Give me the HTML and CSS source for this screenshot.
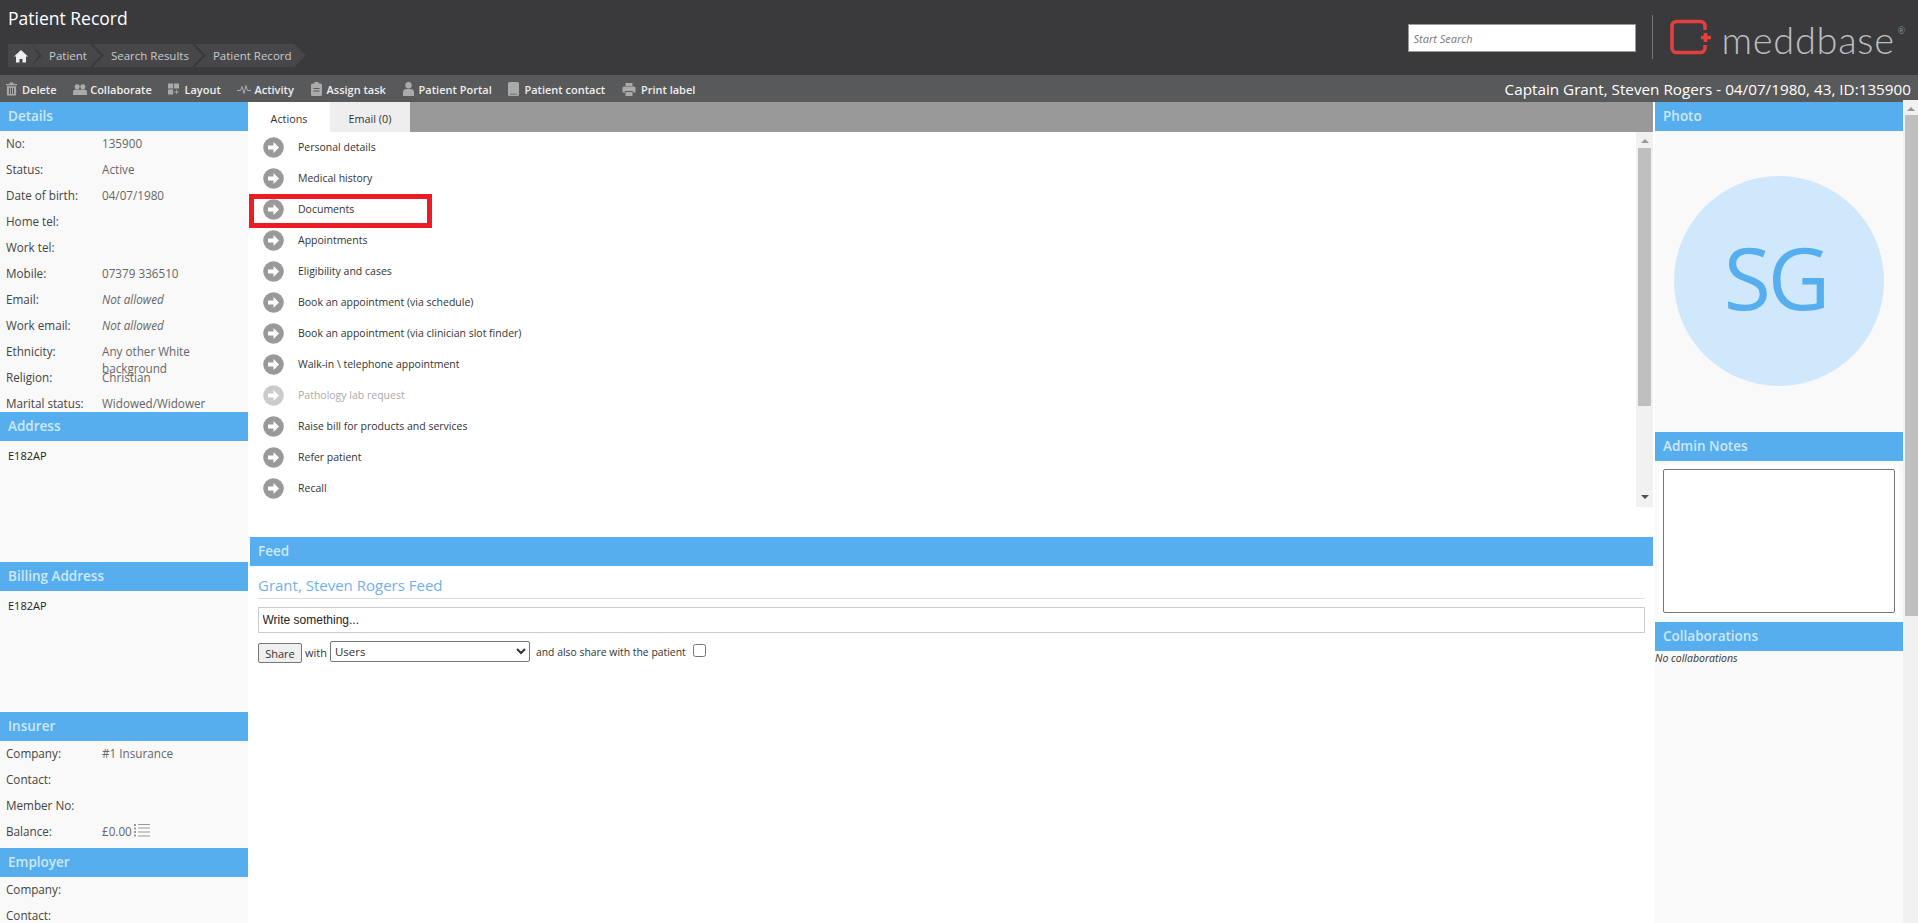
FILE: index.html
```html
<!DOCTYPE html>
<html lang="en">
<head>
<meta charset="utf-8">
<title>Patient Record</title>
<link rel="stylesheet" href="styles.css">
</head>
<body>
<svg class="defs" width="0" height="0" aria-hidden="true">
  <symbol id="go" viewBox="0 0 21 21">
    <circle cx="10.5" cy="10.5" r="10.300" fill="#999"/>
    <path d="M5 8.500h5.500V5l5.500 5.500-5.500 5.500v-3.500H5z" fill="#fff"/>
  </symbol>
</svg>

<header class="topbar">
  <div class="topbar-left">
    <h1 class="page-title">Patient Record</h1>
    <nav class="crumbs">
      <a class="crumb crumb-home"><svg class="home" viewBox="0 0 14 14"><path d="M7 1 0 7.500h2V13.500h3.500V10h3v3.500H12V7.500h2L7 1z" fill="#eee"/></svg></a>
      <a class="crumb">Patient</a>
      <a class="crumb">Search Results</a>
      <a class="crumb">Patient Record</a>
    </nav>
  </div>
  <div class="brand">
    <input class="search" type="text" placeholder="Start Search">
    <span class="divider"></span>
    <svg class="logo-mark" viewBox="0 0 42 36">
      <path d="M35 11V7a4.500 4.500 0 0 0-4.500-4.500H6.500A4.500 4.500 0 0 0 2 7v22a4.500 4.500 0 0 0 4.500 4.500h24A4.500 4.500 0 0 0 35 29v-3" fill="none" stroke="#e2403f" stroke-width="3.600"/>
      <path d="M31 18.500h10M35.500 14v9" fill="none" stroke="#e2403f" stroke-width="3.600"/>
    </svg>
    <span class="logo-text">meddbase<sup class="reg">®</sup></span>
  </div>
</header>

<div class="toolbar">
  <div class="tools">
    <a class="tool"><svg viewBox="0 0 12 14"><path d="M4 0h4v1.500h4V3H0V1.500h4zM1 4h10v9a1 1 0 0 1-1 1H2a1 1 0 0 1-1-1zm2.200 1.500v7h1.200v-7zm2.200 0v7h1.200v-7zm2.200 0v7h1.200v-7z" fill="#aaa"/></svg>Delete</a>
    <a class="tool tool-tight"><svg class="wide" viewBox="0 0 15 12"><circle cx="4.500" cy="3" r="2.700" fill="#aaa"/><circle cx="10.500" cy="3" r="2.700" fill="#aaa"/><path d="M0 12V9a3 3 0 0 1 3-3h3a3 3 0 0 1 1.500.5A3 3 0 0 1 9 6h3a3 3 0 0 1 3 3v3z" fill="#aaa"/></svg>Collaborate</a>
    <a class="tool"><svg viewBox="0 0 13 13"><path d="M0 0h6v6H0zM7 0h6v6H7zM0 7h6v6H0zM9.500 7.500h1v2h2v1h-2v2h-1v-2h-2v-1h2z" fill="#aaa"/></svg>Layout</a>
    <a class="tool tool-tight"><svg class="wide" viewBox="0 0 14 12"><path d="M0 7h3.500L5 3l2 7 2-8 1.500 5H14" fill="none" stroke="#aaa" stroke-width="1"/></svg>Activity</a>
    <a class="tool"><svg viewBox="0 0 11 14"><path d="M3.500 0h4v1.500h2A1.500 1.500 0 0 1 11 3v9.500A1.500 1.500 0 0 1 9.500 14h-8A1.500 1.500 0 0 1 0 12.500V3a1.500 1.500 0 0 1 1.500-1.500h2zM2.500 6v1h6V6zm0 2.500v1h6v-1z" fill="#aaa" fill-rule="evenodd"/></svg>Assign task</a>
    <a class="tool"><svg viewBox="0 0 11 14"><circle cx="5.500" cy="3.200" r="3.200" fill="#aaa"/><path d="M0 14v-3.500A3.500 3.500 0 0 1 3.500 7h4a3.500 3.500 0 0 1 3.500 3.500V14z" fill="#aaa"/></svg>Patient Portal</a>
    <a class="tool"><svg viewBox="0 0 11 14"><path d="M1.500 0h8A1.500 1.500 0 0 1 11 1.500v11A1.500 1.500 0 0 1 9.500 14h-8A1.500 1.500 0 0 1 0 12.500v-11A1.500 1.500 0 0 1 1.500 0zM2 11.800v.8h7v-.8z" fill="#aaa" fill-rule="evenodd"/></svg>Patient contact</a>
    <a class="tool"><svg class="wide" viewBox="0 0 13 13"><path d="M3 0h7v3H3zM1.500 3.500h10A1.500 1.500 0 0 1 13 5v4.500h-2.500V8h-8v1.500H0V5a1.500 1.500 0 0 1 1.500-1.500zM3 9h7v4H3z" fill="#aaa"/></svg>Print label</a>
  </div>
  <div class="patient-id">Captain Grant, Steven Rogers - 04/07/1980, 43, ID:135900</div>
</div>

<main class="workspace">
  <aside class="left-col">
    <section class="panel panel-details">
      <h2 class="panel-head">Details</h2>
      <dl class="facts">
        <div class="fact"><dt>No:</dt><dd>135900</dd></div>
        <div class="fact"><dt>Status:</dt><dd>Active</dd></div>
        <div class="fact"><dt>Date of birth:</dt><dd>04/07/1980</dd></div>
        <div class="fact"><dt>Home tel:</dt><dd></dd></div>
        <div class="fact"><dt>Work tel:</dt><dd></dd></div>
        <div class="fact"><dt>Mobile:</dt><dd>07379 336510</dd></div>
        <div class="fact"><dt>Email:</dt><dd class="muted">Not allowed</dd></div>
        <div class="fact"><dt>Work email:</dt><dd class="muted">Not allowed</dd></div>
        <div class="fact"><dt>Ethnicity:</dt><dd>Any other White background</dd></div>
        <div class="fact"><dt>Religion:</dt><dd>Christian</dd></div>
        <div class="fact"><dt>Marital status:</dt><dd>Widowed/Widower</dd></div>
      </dl>
    </section>
    <section class="panel panel-address">
      <h2 class="panel-head">Address</h2>
      <p class="addr">E182AP</p>
    </section>
    <section class="panel panel-address">
      <h2 class="panel-head">Billing Address</h2>
      <p class="addr">E182AP</p>
    </section>
    <section class="panel panel-insurer">
      <h2 class="panel-head">Insurer</h2>
      <dl class="facts">
        <div class="fact"><dt>Company:</dt><dd>#1 Insurance</dd></div>
        <div class="fact"><dt>Contact:</dt><dd></dd></div>
        <div class="fact"><dt>Member No:</dt><dd></dd></div>
        <div class="fact"><dt>Balance:</dt><dd class="balance">£0.00<svg class="list-ico" viewBox="0 0 16 13"><path d="M0 0h2v2H0zM0 3.500h2v2H0zM0 7h2v2H0zM0 10.500h2v2H0z" fill="#999"/><path d="M4 .5h12M4 4h12M4 8h12M4 12h12" stroke="#999" stroke-width="1"/></svg></dd></div>
      </dl>
    </section>
    <section class="panel panel-fill">
      <h2 class="panel-head">Employer</h2>
      <dl class="facts">
        <div class="fact"><dt>Company:</dt><dd></dd></div>
        <div class="fact"><dt>Contact:</dt><dd></dd></div>
      </dl>
    </section>
  </aside>

  <div class="center-col">
    <div class="tabs">
      <a class="tab tab-on">Actions</a>
      <a class="tab">Email (0)</a>
    </div>
    <div class="actions-wrap">
      <ul class="actions">
        <li class="action"><svg class="go"><use href="#go"/></svg>Personal details</li>
        <li class="action"><svg class="go"><use href="#go"/></svg>Medical history</li>
        <li class="action"><svg class="go"><use href="#go"/></svg>Documents<span class="highlight"></span></li>
        <li class="action"><svg class="go"><use href="#go"/></svg>Appointments</li>
        <li class="action"><svg class="go"><use href="#go"/></svg>Eligibility and cases</li>
        <li class="action"><svg class="go"><use href="#go"/></svg>Book an appointment (via schedule)</li>
        <li class="action"><svg class="go"><use href="#go"/></svg>Book an appointment (via clinician slot finder)</li>
        <li class="action"><svg class="go"><use href="#go"/></svg>Walk-in \ telephone appointment</li>
        <li class="action action-off"><svg class="go"><use href="#go"/></svg>Pathology lab request</li>
        <li class="action"><svg class="go"><use href="#go"/></svg>Raise bill for products and services</li>
        <li class="action"><svg class="go"><use href="#go"/></svg>Refer patient</li>
        <li class="action"><svg class="go"><use href="#go"/></svg>Recall</li>
      </ul>
      <div class="vbar vbar-inner">
        <span class="arrow-up"></span>
        <span class="vthumb"></span>
        <span class="arrow-down"></span>
      </div>
    </div>
    <section class="feed">
      <h2 class="panel-head feed-head">Feed</h2>
      <div class="feed-body">
        <h3 class="feed-title">Grant, Steven Rogers Feed</h3>
        <input class="feed-input" type="text" value="Write something...">
        <div class="share-row">
          <button class="share-btn" type="button">Share</button>
          <span>with</span>
          <select class="share-select"><option>Users</option></select>
          <span class="share-also">and also share with the patient</span>
          <input class="share-check" type="checkbox">
        </div>
      </div>
    </section>
  </div>

  <aside class="right-col">
    <section class="panel panel-photo">
      <h2 class="panel-head">Photo</h2>
      <div class="avatar">SG</div>
    </section>
    <section class="panel panel-notes">
      <h2 class="panel-head">Admin Notes</h2>
      <div class="notes-box"><textarea class="notes"></textarea></div>
    </section>
    <section class="panel panel-fill">
      <h2 class="panel-head">Collaborations</h2>
      <p class="none">No collaborations</p>
    </section>
  </aside>

  <div class="vbar vbar-page">
    <span class="arrow-up"></span>
    <span class="vthumb"></span>
  </div>
</main>
</body>
</html>
```
FILE: styles.css
```css
* { box-sizing: border-box; }
html, body { margin: 0; height: 923px; overflow: hidden; background: #fff; }
body { font: 11px/17px "Open Sans", "Noto Sans", sans-serif; color: #333; }
.defs { position: absolute; }
h1, h2, h3, p, dl, dd, ul { margin: 0; padding: 0; }
ul { list-style: none; }

/* Top bar */
.topbar { height: 75px; background: #3a3a3c; display: flex; justify-content: space-between; }
.topbar-left { padding: 7px 0 0 8px; }
.page-title { font-size: 17.500px; line-height: 23px; font-weight: 400; color: #fff; }
.crumbs { display: flex; margin-top: 14px; height: 23px; }
.crumb { display: flex; align-items: center; height: 23px; background: #47474a; color: #c9cacb; font-size: 11.500px; padding: 0 14px 0 18px; margin-right: -8px;
  clip-path: polygon(0 0, calc(100% - 11px) 0, 100% 50%, calc(100% - 11px) 100%, 0 100%, 11px 50%); }
.crumb-home { padding: 0 11px 0 6px; clip-path: polygon(0 0, calc(100% - 8px) 0, 100% 50%, calc(100% - 8px) 100%, 0 100%); }
.home { width: 14px; height: 14px; }
.brand { display: flex; align-items: flex-start; padding-right: 12px; }
.search { width: 228px; height: 28px; margin: 24px 16px 0 0; border: 1px solid #999; background: #fff; padding: 0 5px; font: italic 11px "Open Sans", sans-serif; outline: 0; }
.search::placeholder { color: #777; }
.divider { width: 1px; height: 44px; margin: 15px 17px 0 0; background: #777; }
.logo-mark { width: 42px; height: 36px; margin: 19px 10px 0 0; }
.logo-text { font: 300 38px/44px Lato, sans-serif; color: #bcbdc0; margin-top: 17px; letter-spacing: .7px; white-space: nowrap; }
.reg { font-size: 9px; line-height: 0; vertical-align: 20px; margin-left: 3px; }

/* Toolbar */
.toolbar { height: 27px; background: #58595b; display: flex; justify-content: space-between; align-items: center; padding: 1px 7px 0 6px; }
.tools { display: flex; gap: 16.700px; }
.tool { display: flex; align-items: center; gap: 5px; font-size: 11px; font-weight: 600; color: #eee; white-space: nowrap; }
.tool-tight { gap: 3px; }
.tool svg { width: 11px; height: 14px; flex: none; }
.tool svg.wide { width: 14px; height: 13px; }
.patient-id { font-size: 15.250px; color: #fff; white-space: nowrap; }

/* Columns */
.workspace { display: grid; grid-template-columns: 248px 1405px 250px 15px; height: 821px; }
.left-col, .right-col { background: #f9f9f9; overflow: hidden; }
.right-col { margin-left: 2px; }
.panel { overflow: hidden; }
.panel-head { height: 29px; background: #56aeee; color: #cde8fb; font-size: 13.500px; line-height: 28px; font-weight: 600; padding-left: 8px; }
.panel-details { height: 310px; }
.panel-address { height: 150px; }
.panel-insurer { height: 136px; }
.panel-photo { height: 330px; }
.panel-notes { height: 190px; }
.panel-fill { flex: 1; }

.fact { display: flex; height: 26px; padding: 4px 0 0 6px; font-size: 11.700px; }
.fact dt { width: 96px; flex: none; color: #444; }
.fact dd { width: 106px; color: #666; }
.fact dd.muted { font-style: italic; }
.balance { display: flex; align-items: flex-start; gap: 2px; }
.list-ico { width: 16px; height: 13px; margin-top: 1px; }
.addr { padding: 6px 0 0 8px; color: #222; }

/* Actions */
.tabs { height: 30px; background: #999; display: flex; }
.tab { display: flex; align-items: center; justify-content: center; width: 82px; padding-top: 2px; background: #eee; color: #333; font-size: 10.800px; }
.tab-on { background: #fff; }
.tab + .tab { width: 80px; }
.actions-wrap { display: flex; height: 375px; }
.actions { flex: 1; }
.action { position: relative; display: flex; align-items: center; gap: 14px; height: 31px; padding: 0 0 1px 15px; color: #333; font-size: 10.500px; }
.action .go { margin-bottom: -1px; }
.action-off { color: #aaa; }
.action-off .go { opacity: .5; }
.go { width: 21px; height: 21px; flex: none; }
.highlight { position: absolute; left: 1px; top: 0; width: 183px; height: 34px; border: 5px solid #ed1c24; }
.vbar { background: #f1f1f1; display: flex; flex-direction: column; align-items: center; }
.vbar-inner { width: 17px; flex: none; padding: 0 2px; }
.vthumb { display: block; width: 100%; background: #bfbfbf; }
.vbar-inner .vthumb { height: 258px; margin-top: 5px; }
.arrow-up, .arrow-down { display: block; width: 0; height: 0; border: 4px solid transparent; }
.arrow-up { border-bottom: 4px solid #999; border-top: 0; margin-top: 7px; }
.vbar-inner .arrow-down { border-top: 4px solid #505050; border-bottom: 0; margin-top: 89px; }
.vbar-page { margin-top: -2px; align-items: flex-end; height: 823px; }
.vbar-page .arrow-up { margin: 7px 3px 0 0; }
.vbar-page .vthumb { width: 13px; height: 501px; margin-top: 4px; }

/* Feed */
.feed { margin: 30px 0 0 2px; }
.feed-body { padding: 0 8px; }
.feed-title { font-size: 15px; line-height: 26px; height: 33px; padding-top: 6px; font-weight: 400; color: #6fb1ee; border-bottom: 1px solid #ddd; }
.feed-input { display: block; width: 100%; height: 26px; margin-top: 8px; padding: 0 3.500px; border: 1px solid #ccc; font: 12px "Liberation Sans", sans-serif; color: #222; outline: 0; }
.share-row { display: flex; align-items: center; height: 22px; margin-top: 8px; }
.share-btn { width: 44px; height: 20px; padding: 0; margin-right: 3px; margin-top: 2px; font: 11px "Open Sans", sans-serif; background: #efefef; color: #333; border: 1px solid #767676; border-radius: 2px; }
.share-select { width: 200px; height: 21px; margin: 0 0 2px 3px; font: 11.500px "Open Sans", sans-serif; color: #333; background: #fff; border: 1px solid #767676; border-radius: 2px; }
.share-also { margin: 0 7px 0 6px; font-size: 10.400px; }
.share-check { width: 13px; height: 13px; margin: 0 0 3px; }

/* Right */
.avatar { width: 210px; height: 210px; margin: 45px auto 0; border-radius: 50%; background: #d0e8fb; color: #56aeee; font-size: 86px; line-height: 202px; text-align: center; letter-spacing: -3px; text-indent: -7px; }
.notes-box { margin: 4px; height: 152px; background: #fff; padding: 4px; }
.notes { display: block; width: 100%; height: 100%; border: 1px solid #767676; border-radius: 2px; resize: none; background: #fff; outline: 0; }
.none { font-style: italic; font-size: 10.500px; line-height: 14px; color: #333; }
```
